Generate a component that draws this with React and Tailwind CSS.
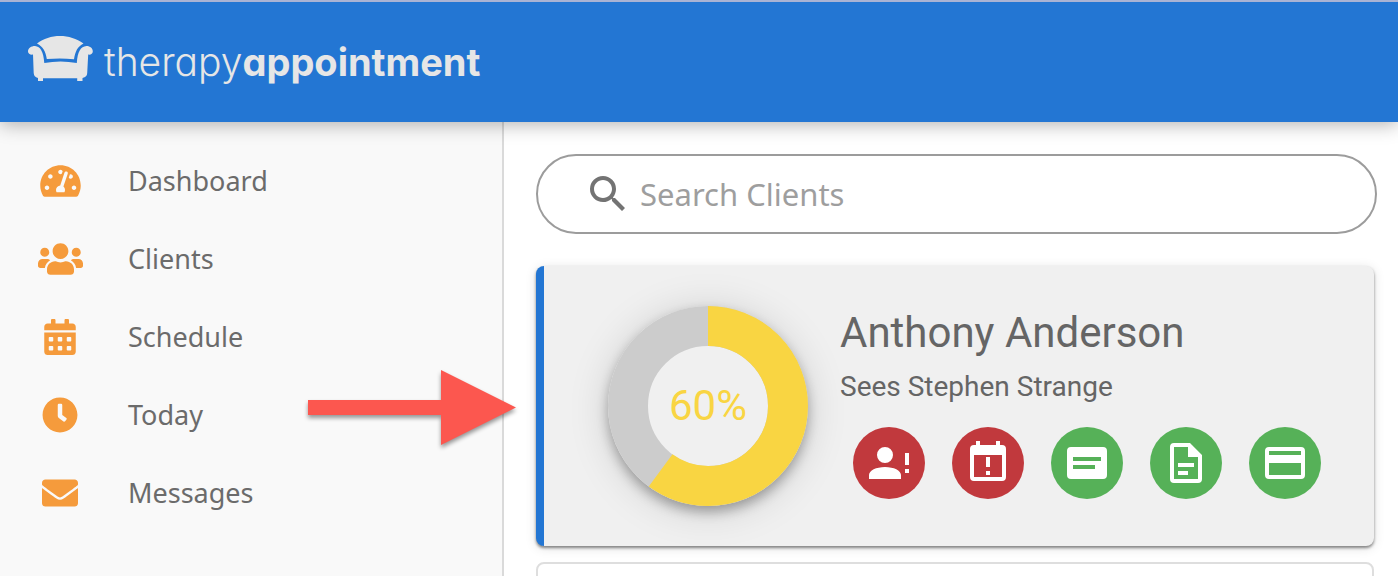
import React from "react";
import {
  FaTachometerAlt,
  FaUsers,
  FaCalendarAlt,
  FaClock,
  FaEnvelope,
} from "react-icons/fa";

const NAV = [
  { label: "Dashboard", Icon: FaTachometerAlt, size: "w-[41px]" },
  { label: "Clients", Icon: FaUsers, size: "w-[45px]" },
  { label: "Schedule", Icon: FaCalendarAlt, size: "w-8" },
  { label: "Today", Icon: FaClock, size: "w-9" },
  { label: "Messages", Icon: FaEnvelope, size: "w-9" },
];

const STATUSES = [
  {
    label: "Client account needs attention",
    color: "bg-[#c1393d]",
    path: "M10 4a4 4 0 1 1 0 8a4 4 0 0 1 0-8zM10 14c4.42 0 8 1.79 8 4v2H2v-2c0-2.21 3.58-4 8-4zM20 7h2v6h-2zM20 15h2v2h-2z",
  },
  {
    label: "Appointment needs attention",
    color: "bg-[#c1393d]",
    path: "M19 3h-1V1h-2v2H8V1H6v2H5a2 2 0 0 0-2 2v14a2 2 0 0 0 2 2h14a2 2 0 0 0 2-2V5a2 2 0 0 0-2-2zM19 19H5V8h14zM11 9h2v5h-2zM11 16h2v2h-2z",
  },
  {
    label: "Notes",
    color: "bg-[#56b158]",
    path: "M4 4h16a2 2 0 0 1 2 2v12a2 2 0 0 1-2 2H4a2 2 0 0 1-2-2V6a2 2 0 0 1 2-2zM5 9v2h14V9zM5 13v2h11v-2z",
  },
  {
    label: "Forms",
    color: "bg-[#56b158]",
    path: "M6 2a2 2 0 0 0-2 2v16a2 2 0 0 0 2 2h12a2 2 0 0 0 2-2V8l-6-6zM6 4h7v5h5v11H6zM8 12v2h8v-2zM8 16v2h5v-2z",
  },
  {
    label: "Billing",
    color: "bg-[#56b158]",
    path: "M4 4h16a2 2 0 0 1 2 2v12a2 2 0 0 1-2 2H4a2 2 0 0 1-2-2V6a2 2 0 0 1 2-2zM4 6v2h16V6zM4 12v6h16v-6z",
  },
];

function Logo() {
  return (
    <a href="#home" className="flex items-center gap-[10px] text-[#e6e6e6]">
      <svg className="mb-1.5" width="66" height="46" viewBox="0 0 66 46" fill="currentColor" aria-hidden="true">
        <path d="M9 7.500C15.500 2.600 23.500 0 32 0S48.500 2.600 55.500 7.500C49.500 10.500 47.200 15.500 46 23.200C37 22.200 28 22.200 18.800 23C17.600 15.500 15 10.500 9 7.500Z" />
        <path d="M0 15.500C0 12.200 3.200 10 7 10C12.500 10.500 15.400 15.500 16.300 27C27 25 38 25 48.800 27C49.600 15.500 52.500 10.500 58.500 10C62.200 10 64.800 12.300 64.800 15.500C64.800 17.800 62.800 19 60.200 18.600L59.200 37C59 40 57.800 41.200 54.500 42V45H49.200V42.300H15V45H10V42C7 41.200 6 40 5.700 37L5 18.600C2.300 19 0 17.800 0 15.500Z" />
      </svg>
      <span className="font-['Inter',sans-serif] text-[39px] leading-[48px] [font-feature-settings:'cv11']">
        <span className="font-light">therapy</span>
        <span className="text-[38px] font-bold">appointment</span>
      </span>
    </a>
  );
}

function ProgressRing({ percent }) {
  const length = 2 * Math.PI * 80;
  return (
    <div className="grid size-[200px] shrink-0 place-items-center rounded-full shadow-[0_6px_12px_rgba(0,0,0,0.3),0_4px_40px_rgba(0,0,0,0.15)]">
      <svg viewBox="0 0 200 200" className="col-start-1 row-start-1 size-full" aria-hidden="true">
        <circle cx="100" cy="100" r="99" fill="#f0f0f0" />
        <circle cx="100" cy="100" r="80" fill="none" stroke="#cccccc" strokeWidth="40" />
        <circle
          cx="100"
          cy="100"
          r="80"
          fill="none"
          stroke="#f9d542"
          strokeWidth="40"
          strokeDasharray={`${(length * percent) / 100} ${length}`}
          transform="rotate(-90 100 100)"
        />
      </svg>
      <span className="col-start-1 row-start-1 font-[Roboto,sans-serif] text-[42px] leading-[48px] text-[#f9d542]">
        {percent}%
      </span>
    </div>
  );
}

export default function App() {
  return (
    <div className="relative flex h-screen flex-col overflow-hidden bg-white font-['Noto_Sans',sans-serif]">
      <header className="relative z-10 flex h-[122px] shrink-0 items-center border-t-2 border-[#a9b3d4] bg-[#2376d3] px-7 shadow-[0_2px_18px_rgba(0,0,0,0.32)]">
        <Logo />
      </header>

      <div className="flex min-h-0 flex-1">
        <nav className="w-[504px] shrink-0 border-r-2 border-[#dadada] bg-[#f9f9f9] pt-5">
          <ul>
            {NAV.map(({ label, Icon, size }) => (
              <li key={label}>
                <a href={`#${label.toLowerCase()}`} className="flex h-[78px] items-center gap-11 px-9 text-[27px] leading-9 text-[#6b6b6b]">
                  <span className="flex w-12 justify-center text-[#f59b3c]">
                    <Icon className={`h-9 ${size}`} aria-hidden="true" />
                  </span>
                  {label}
                </a>
              </li>
            ))}
          </ul>
        </nav>

        <main className="flex min-w-0 flex-1 flex-col gap-4 overflow-hidden px-8 pt-8">
          <label className="-mr-[11px] mb-4 flex h-20 shrink-0 items-center gap-2 rounded-full border-2 border-[#9c9c9c] pr-10 pl-[46px]">
            <svg className="size-12 shrink-0 fill-[#737373]" viewBox="0 0 24 24" aria-hidden="true">
              <path d="M9.500 3A6.500 6.500 0 0 1 16 9.500C16 11.110 15.410 12.590 14.440 13.730L14.710 14H15.500L20.500 19L19 20.500L14 15.500V14.710L13.730 14.440C12.590 15.410 11.110 16 9.500 16A6.500 6.500 0 0 1 9.500 3M9.500 5C7 5 5 7 5 9.500S7 14 9.500 14S14 12 14 9.500S12 5 9.500 5Z" />
            </svg>
            <input
              type="search"
              aria-label="Search Clients"
              placeholder="Search Clients"
              className="min-w-0 flex-1 bg-transparent text-[31px] text-[#555555] outline-none placeholder:text-[#9e9e9e]"
            />
          </label>

          <article className="-mr-2 flex h-[280px] shrink-0 items-center gap-8 rounded-lg border-l-8 border-[#2376d3] bg-[#f0f0f0] pl-16 shadow-[0_2px_3px_rgba(0,0,0,0.45),0_2px_12px_rgba(0,0,0,0.12)]">
            <ProgressRing percent={60} />
            <div className="pb-2 font-[Roboto,sans-serif] text-[#656565]">
              <h2 className="text-[42px] leading-[56px]">Anthony Anderson</h2>
              <p className="mt-1 text-[28px] leading-[44px]">Sees Stephen Strange</p>
              <div className="mt-[18px] flex gap-[27px] pl-[13px]">
                {STATUSES.map(({ label, color, path }) => (
                  <button key={label} type="button" aria-label={label} className={`grid size-[72px] place-items-center rounded-full ${color}`}>
                    <svg className="size-12 fill-white" viewBox="0 0 24 24" aria-hidden="true">
                      <path fillRule="evenodd" d={path} />
                    </svg>
                  </button>
                ))}
              </div>
            </div>
          </article>

          <article className="-mr-2 h-[280px] shrink-0 rounded-lg border-2 border-[#dedede] bg-white" />
        </main>
      </div>

      <svg
        className="pointer-events-none absolute top-[370px] left-[308px] z-20 overflow-visible drop-shadow-[0_3px_2px_rgba(0,0,0,0.4)]"
        width="208"
        height="75"
        viewBox="0 0 208 75"
        aria-hidden="true"
      >
        <path d="M0 30H133V0L208 37.500L133 75V45H0Z" fill="#fc574f" />
      </svg>
    </div>
  );
}
